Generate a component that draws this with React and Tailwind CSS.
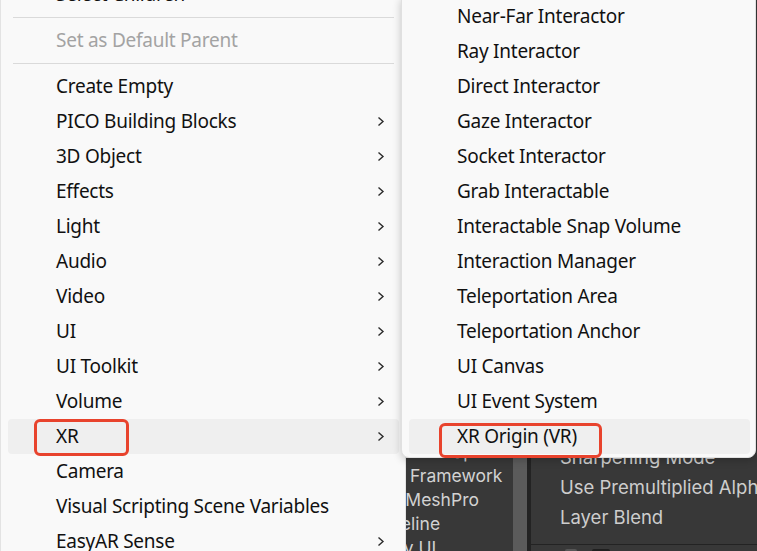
import React from 'react';

const menuFont = { fontFamily: '"Noto Sans", "Open Sans", sans-serif' };

// Unity "GameObject" context menu, with the XR submenu open over the editor.
const mainItems = [
  { label: 'Create Empty' },
  { label: 'PICO Building Blocks', sub: true },
  { label: '3D Object', sub: true },
  { label: 'Effects', sub: true },
  { label: 'Light', sub: true },
  { label: 'Audio', sub: true },
  { label: 'Video', sub: true },
  { label: 'UI', sub: true },
  { label: 'UI Toolkit', sub: true },
  { label: 'Volume', sub: true },
  { label: 'XR', sub: true, active: true },
  { label: 'Camera' },
  { label: 'Visual Scripting Scene Variables' },
  { label: 'EasyAR Sense', sub: true },
];

const xrItems = [
  'Near-Far Interactor',
  'Ray Interactor',
  'Direct Interactor',
  'Gaze Interactor',
  'Socket Interactor',
  'Grab Interactable',
  'Interactable Snap Volume',
  'Interaction Manager',
  'Teleportation Area',
  'Teleportation Anchor',
  'UI Canvas',
  'UI Event System',
  'XR Origin (VR)',
];

const packages = ['Shader Graph', 'Test Framework', 'TextMeshPro', 'Timeline', 'Unity UI'];

function Chevron() {
  return (
    <svg width="8" height="11" viewBox="0 0 8 11" className="shrink-0">
      <polyline points="1.5,1.5 6,5.5 1.5,9.5" fill="none" stroke="#2b2b2b" strokeWidth="1.4" />
    </svg>
  );
}

function Separator() {
  return (
    <div className="flex h-[11px] items-center pl-[12px] pr-[11px]">
      <div className="h-px w-full bg-[#dadada]" />
    </div>
  );
}

function MenuRow({ label, sub, active, disabled }) {
  return (
    <div
      className={`relative ml-[7px] mr-[6px] flex h-[35px] shrink-0 items-center rounded-[4px] pl-12 pr-[14px] text-[19px] tracking-[-0.25px] ${
        active ? 'bg-[#efefef]' : ''
      } ${disabled ? 'text-[#a3a3a3]' : 'text-[#111]'}`}
    >
      <span className="flex-1 whitespace-nowrap">{label}</span>
      {sub && <Chevron />}
      {active && (
        <div className="absolute left-[26px] top-0 h-[37px] w-[95px] rounded-[6px] border-[3px] border-[#e8432d]" />
      )}
    </div>
  );
}

export default function App() {
  return (
    <div className="relative flex h-[551px] w-[757px] overflow-hidden bg-[#383838]">
      {/* editor underneath: package list, scrollbar, inspector */}
      <div
        className="flex w-[513px] shrink-0 flex-col pl-[370px] pt-[440px] text-[17.5px] text-[#d2d2d2]"
        style={{ fontFamily: 'Inter, sans-serif' }}
      >
        {packages.map((p) => (
          <div key={p} className="flex h-6 shrink-0 items-center whitespace-nowrap">
            {p}
          </div>
        ))}
      </div>
      <div className="w-[14px] shrink-0 bg-[#5b5b5b]" />
      <div className="w-[4px] shrink-0 bg-[#232323]" />
      <div
        className="flex min-w-0 flex-1 flex-col pt-[443px] text-[18.5px] text-[#cdcdcd]"
        style={{ fontFamily: 'Inter, sans-serif' }}
      >
        {['Sharpening Mode', 'Use Premultiplied Alpha', 'Layer Blend'].map((t) => (
          <div key={t} className="flex h-[30px] shrink-0 items-center whitespace-nowrap pl-[29px]">
            {t}
          </div>
        ))}
        <div className="mt-[11px] flex gap-[15px] border-t border-[#232323] pl-[34px] pt-[4px]">
          <div className="h-4 w-[12px] rounded-[2px] bg-[#565656]" />
          <div className="h-4 w-[18px] rounded-[2px] bg-[#1f1f1f]" />
        </div>
      </div>

      {/* main context menu */}
      <div
        className="absolute left-0 top-0 flex h-full w-[406px] flex-col border-x border-[#e3e3e3] bg-[#f9f9f9]"
        style={menuFont}
      >
        <div className="-mt-[23px] flex flex-col">
          <MenuRow label="Select Children" />
          <Separator />
          <MenuRow label="Set as Default Parent" disabled />
          <Separator />
          {mainItems.map((it) => (
            <MenuRow key={it.label} {...it} />
          ))}
        </div>
      </div>

      {/* XR submenu */}
      <div
        className="absolute left-[401px] top-[-2px] flex w-[355px] flex-col rounded-b-[8px] border border-[#e0e0e0] bg-[#f9f9f9] pb-[3px] shadow-[0_2px_8px_rgba(0,0,0,0.22)]"
        style={menuFont}
      >
        {xrItems.map((label, i) => (
          <div
            key={label}
            className={`relative ml-[7px] mr-[5px] flex h-[35px] shrink-0 items-center rounded-[4px] pl-12 text-[19px] tracking-[-0.25px] text-[#111] ${
              i === xrItems.length - 1 ? 'bg-[#efefef]' : ''
            }`}
          >
            <span className="whitespace-nowrap">{label}</span>
            {i === xrItems.length - 1 && (
              <div className="absolute left-[30px] top-[4px] h-[35px] w-[163px] rounded-[6px] border-[3px] border-[#e8432d]" />
            )}
          </div>
        ))}
      </div>
    </div>
  );
}
